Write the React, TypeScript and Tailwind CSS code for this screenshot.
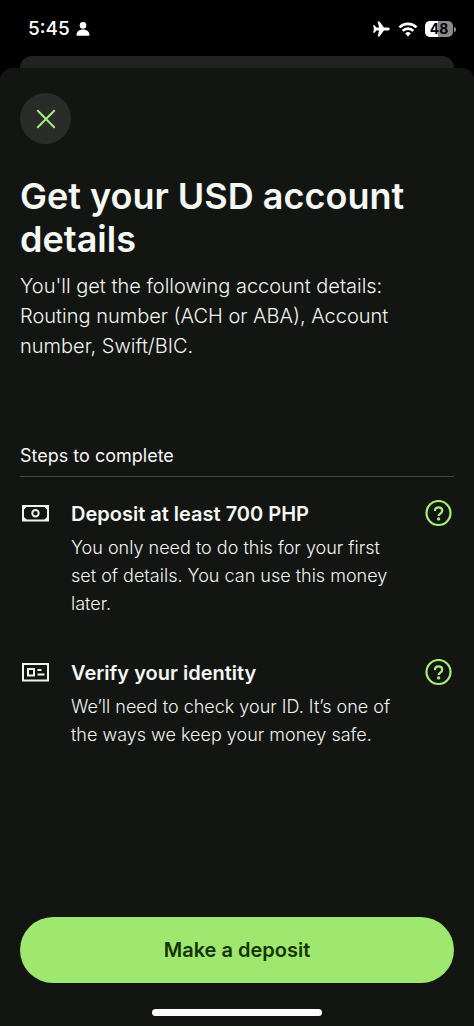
import type { ReactNode } from "react";

function PersonIcon() {
  return (
    <svg viewBox="0 0 14 14" className="size-3.5" fill="currentColor" aria-hidden="true">
      <circle cx="7" cy="3.4" r="3.3" />
      <path d="M.5 13C.5 9.600 3.300 7.500 7 7.500s6.500 2.100 6.500 5.500c0 .4-.3.700-.7.700H1.200c-.4 0-.7-.3-.7-.7Z" />
    </svg>
  );
}

function PlaneIcon() {
  return (
    <svg viewBox="0 0 19 16" className="h-4 w-[19px]" fill="currentColor" aria-hidden="true">
      <path d="M17.800 8c0 .9-1 1.500-2.200 1.500h-3.700l-4.200 5.700c-.2.300-.4.400-.7.400h-.9c-.3 0-.5-.2-.4-.5L7.100 9.500H4.400L2.800 11.500c-.1.200-.3.300-.5.300h-.8c-.3 0-.4-.2-.3-.4L1.900 8l-.7-3.400c-.1-.2 0-.4.300-.4h.8c.2 0 .4.100.5.300l1.600 2h2.700L5.700.9c-.1-.3.100-.5.400-.5H7c.3 0 .5.100.7.400l4.200 5.700h3.700c1.200 0 2.200.6 2.200 1.500Z" />
    </svg>
  );
}

function WifiIcon() {
  return (
    <svg viewBox="0 0 20 15" className="h-[15px] w-5" fill="none" stroke="currentColor" strokeWidth="2.700" aria-hidden="true">
      <path d="M1.500 5.400a12.100 12.100 0 0 1 17 0" />
      <path d="M4.700 8.900a7.500 7.500 0 0 1 10.600 0" />
      <path d="M10 14.400 7.100 11.500a4.100 4.100 0 0 1 5.800 0Z" fill="currentColor" stroke="none" />
    </svg>
  );
}

function Battery({ level }: { level: number }) {
  return (
    <div className="flex items-center gap-px">
      <div className="relative h-4 w-7 overflow-hidden rounded-[5px] bg-[#8b8b8b]">
        <div className="h-full bg-white" style={{ width: `${level}%` }} />
        <span className="absolute inset-0 text-center text-[14px] leading-4 font-bold text-black">{level}</span>
      </div>
      <div className="h-[5px] w-[2px] rounded-r-full bg-[#8b8b8b]" />
    </div>
  );
}

function CloseIcon() {
  return (
    <svg viewBox="0 0 20 20" className="size-5" fill="none" stroke="currentColor" strokeWidth="2" aria-hidden="true">
      <path d="M1.300 1.300 18.700 18.700M18.700 1.300 1.300 18.700" />
    </svg>
  );
}

function BanknoteIcon() {
  return (
    <svg viewBox="0 0 30 20" className="h-5 w-[30px]" fill="none" stroke="currentColor" strokeWidth="2" aria-hidden="true">
      <rect x="3" y="2" width="25" height="14.500" />
      <circle cx="15.500" cy="9.200" r="3.200" />
      <path d="M3 2h4.500L3 6.500ZM28 2h-4.500L28 6.500ZM3 16.500h4.500L3 12ZM28 16.500h-4.500L28 12Z" fill="currentColor" stroke="none" />
    </svg>
  );
}

function IdCardIcon() {
  return (
    <svg viewBox="0 0 30 20" className="h-5 w-[30px]" fill="none" stroke="currentColor" strokeWidth="2" aria-hidden="true">
      <rect x="3" y="1" width="25" height="16.500" />
      <rect x="8" y="6" width="6" height="6.500" />
      <path d="M17.500 7h4M17.500 11.500h7" />
    </svg>
  );
}

function HelpIcon() {
  return (
    <svg viewBox="0 0 28 28" className="size-7" fill="none" stroke="currentColor" strokeWidth="2.200" aria-hidden="true">
      <circle cx="13.500" cy="13" r="12" />
      <path d="M9.900 11.100c0-2.200 1.500-3.700 3.700-3.700s3.600 1.300 3.600 3.300c0 1.500-.8 2.200-1.900 3-1.100.8-1.700 1.200-1.700 2.300" />
      <circle cx="13.600" cy="18.900" r="1.700" fill="currentColor" stroke="none" />
    </svg>
  );
}

function Step({ icon, title, children }: { icon: ReactNode; title: string; children: ReactNode }) {
  return (
    <li className="flex items-start">
      <div className="flex h-7 w-[51px] shrink-0 items-center text-[#f2f4f0]">{icon}</div>
      <div className="min-w-0 flex-1">
        <h2 className="text-[20px] leading-7 font-semibold text-[#f6f8f4]">{title}</h2>
        <p className="mt-1.5 text-[18px] leading-7 font-light text-[#f2f4f0]">{children}</p>
      </div>
      <button type="button" aria-label={`Help: ${title}`} className="ml-8 shrink-0 pr-px text-[#a5ee74]">
        <HelpIcon />
      </button>
    </li>
  );
}

export default function App() {
  return (
    <div className="flex min-h-screen flex-col bg-black font-['Inter',sans-serif] text-[#f6f8f4]">
      <header className="flex h-14 items-center justify-between pt-0.5 pr-[18px] pl-7 text-white">
        <div className="flex items-center gap-1.5">
          <time className="text-[19px] leading-6 font-medium">5:45</time>
          <PersonIcon />
        </div>
        <div className="flex items-center gap-[7px]">
          <PlaneIcon />
          <WifiIcon />
          <Battery level={48} />
        </div>
      </header>

      <div className="mx-5 h-3 rounded-t-xl bg-[#202221]" />

      <main className="flex flex-1 flex-col rounded-t-xl bg-[#131512] px-5 pt-[25px]">
        <button
          type="button"
          aria-label="Close"
          className="flex size-[51px] items-center justify-center rounded-full bg-[#2a2c29] text-[#a9ec7f]"
        >
          <CloseIcon />
        </button>

        <h1 className="mt-[31px] text-[36px] leading-[43px] font-semibold">Get your USD account details</h1>
        <p className="mt-2.5 text-[20px] leading-[30px] font-light text-[#f2f4f0]">
          You'll get the following account details: Routing number (ACH or ABA), Account number, Swift/BIC.
        </p>

        <section className="mt-[83px]">
          <div className="border-b border-[#464845] pb-2 text-[18px] leading-6 text-[#f6f8f4]">
            Steps to complete
          </div>
          <ol className="mt-[23px] flex flex-col gap-[41px]">
            <Step icon={<BanknoteIcon />} title="Deposit at least 700 PHP">
              You only need to do this for your first set of details. You can use this money later.
            </Step>
            <Step icon={<IdCardIcon />} title="Verify your identity">
              We’ll need to check your ID. It’s one of the ways we keep your money safe.
            </Step>
          </ol>
        </section>

        <div className="mt-auto flex flex-col items-center pt-10 pb-2.5">
          <button
            type="button"
            className="h-[66px] w-full rounded-full bg-[#9fe870] text-[20px] leading-7 font-semibold text-[#163300]"
          >
            Make a deposit
          </button>
          <div className="mt-[26px] h-[7px] w-[170px] rounded-full bg-white" />
        </div>
      </main>
    </div>
  );
}
